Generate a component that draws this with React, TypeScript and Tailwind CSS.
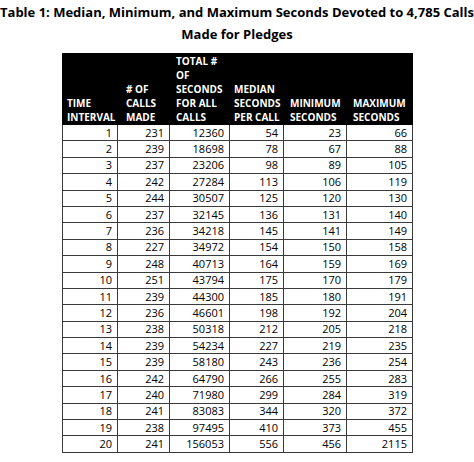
import React from "react";

const rows: number[][] = [
  [1, 231, 12360, 54, 23, 66],
  [2, 239, 18698, 78, 67, 88],
  [3, 237, 23206, 98, 89, 105],
  [4, 242, 27284, 113, 106, 119],
  [5, 244, 30507, 125, 120, 130],
  [6, 237, 32145, 136, 131, 140],
  [7, 236, 34218, 145, 141, 149],
  [8, 227, 34972, 154, 150, 158],
  [9, 248, 40713, 164, 159, 169],
  [10, 251, 43794, 175, 170, 179],
  [11, 239, 44300, 185, 180, 191],
  [12, 236, 46601, 198, 192, 204],
  [13, 238, 50318, 212, 205, 218],
  [14, 239, 54234, 227, 219, 235],
  [15, 239, 58180, 243, 236, 254],
  [16, 242, 64790, 266, 255, 283],
  [17, 240, 71980, 299, 284, 319],
  [18, 241, 83083, 344, 320, 372],
  [19, 238, 97495, 410, 373, 455],
  [20, 241, 156053, 556, 456, 2115],
];

const headers: string[][] = [
  ["TIME", "INTERVAL"],
  ["# OF", "CALLS", "MADE"],
  ["TOTAL #", "OF", "SECONDS", "FOR ALL", "CALLS"],
  ["MEDIAN", "SECONDS", "PER CALL"],
  ["MINIMUM", "SECONDS"],
  ["MAXIMUM", "SECONDS"],
];

const padL = ["pl-[5px]", "pl-[8px]", "pl-[6px]", "pl-[4px]", "pl-[6px]", "pl-[6px]"];

export default function App() {
  return (
    <div
      className="w-[474px] h-[462px] bg-white text-black"
      style={{ fontFamily: '"Open Sans", "Liberation Sans", sans-serif' }}
    >
      <div className="pt-[1px] text-center font-bold text-[13px] leading-[22px] whitespace-nowrap">
        <div>Table 1: Median, Minimum, and Maximum Seconds Devoted to 4,785 Calls</div>
        <div>Made for Pledges</div>
      </div>
      <div className="ml-[62px] mt-[8px] w-[351px] grid grid-cols-[56px_52px_60px_54px_63px_66px]">
        {headers.map((h, i) => (
          <div
            key={i}
            className={`h-[72px] bg-black text-white flex flex-col justify-end font-bold text-[10px] leading-[14px] ${padL[i]} pb-[1px]`}
          >
            {h.map((l, j) => (
              <div key={j} className="whitespace-nowrap">{l}</div>
            ))}
          </div>
        ))}
        {rows.map((r, i) =>
          r.map((v, j) => (
            <div
              key={`${i}-${j}`}
              className={`h-[16.4px] flex items-center justify-end pr-[5px] text-[11px] leading-[14px] border-b border-r border-[#3a3a3a] ${j === 0 ? "border-l" : ""}`}
            >
              {v}
            </div>
          ))
        )}
      </div>
    </div>
  );
}
